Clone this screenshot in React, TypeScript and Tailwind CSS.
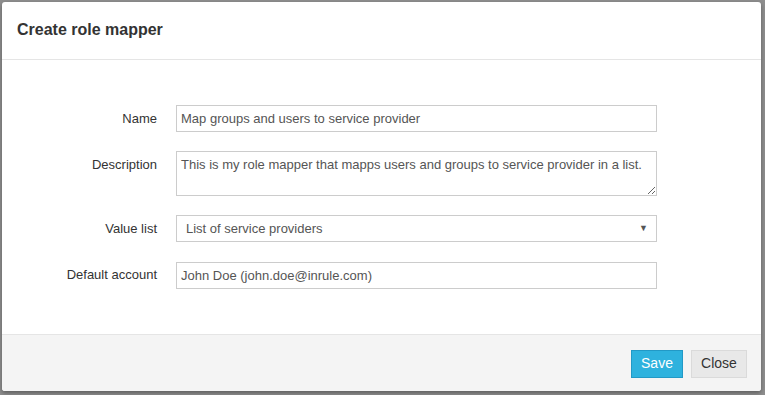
export default function App() {
  return (
    <div className="w-[765px] h-[395px] bg-[#8e8e8e] pl-[2px] pt-[2px] font-['Liberation_Sans',Arial,sans-serif]">
      <div className="w-[759px] h-[389px] bg-white rounded-[3px] shadow-[0_2px_4px_rgba(0,0,0,0.35)] flex flex-col overflow-hidden">
        <header className="h-[58px] border-b border-[#e5e5e5] px-[15px] flex items-center">
          <h1 className="text-[16px] font-bold text-[#333] mt-[-1px]">Create role mapper</h1>
        </header>

        <div className="flex-1 pt-[45px]">
          <div className="grid grid-cols-[155px_481px] gap-x-[19px] gap-y-[19px] text-[13px]">
            <label className="text-right text-[#333] pt-[4px]">Name</label>
            <input
              className="h-[27px] border border-[#ccc] px-[4px] text-[#555] outline-none"
              defaultValue="Map groups and users to service provider"
            />

            <label className="text-right text-[#333] pt-[4px]">Description</label>
            <textarea
              className="h-[45px] border border-[#ccc] px-[4px] pt-[5px] text-[#555] outline-none leading-[16px]"
              defaultValue="This is my role mapper that mapps users and groups to service provider in a list."
            />

            <label className="text-right text-[#333] pt-[4px]">Value list</label>
            <div className="h-[27px] border border-[#ccc] pl-[9px] pr-[8px] text-[#555] flex items-center justify-between">
              <span>List of service providers</span>
              <span className="text-[9px] text-[#555]">▼</span>
            </div>

            <label className="text-right text-[#333] pt-[3px] mt-[1px]">Default account</label>
            <input
              className="h-[27px] border border-[#ccc] px-[4px] text-[#555] outline-none mt-[1px]"
              defaultValue="John Doe (john.doe@inrule.com)"
            />
          </div>
        </div>

        <footer className="h-[57px] border-t border-[#e5e5e5] bg-[#f4f4f4] flex items-center justify-end gap-[8px] pr-[14px] pt-[1px]">
          <button className="h-[28px] w-[52px] bg-[#2eb2de] border border-[#2299c6] text-white text-[14px]">
            Save
          </button>
          <button className="h-[28px] w-[56px] bg-[#e8e8e8] border border-[#dadada] text-[#333] text-[14px]">
            Close
          </button>
        </footer>
      </div>
    </div>
  );
}
